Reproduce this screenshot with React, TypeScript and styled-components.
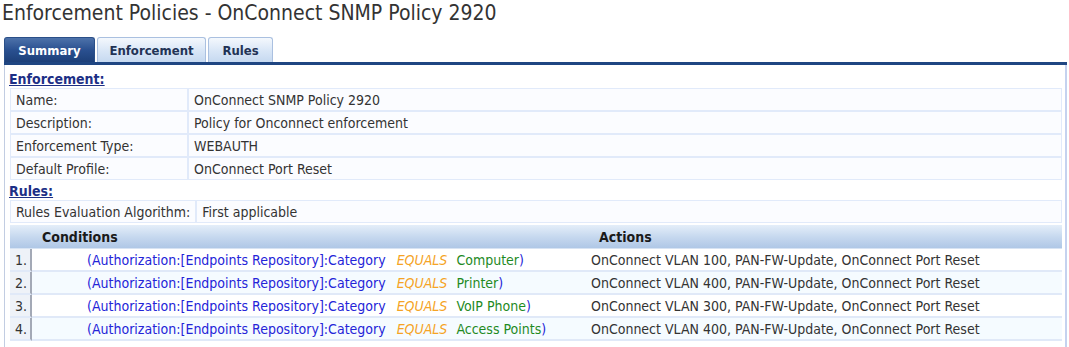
import React from "react";
import styled, { createGlobalStyle } from "styled-components";

const Global = createGlobalStyle`
  html, body { margin: 0; padding: 0; background: #fff; }
  body { font-family: "DejaVu Sans", Verdana, sans-serif; font-stretch: condensed; color: #333; }
`;

const Page = styled.div`
  padding: 0 2px 0 4px;
`;

const Title = styled.h1`
  margin: 0 0 0 -2px;
  height: 37px;
  font-weight: normal;
  font-size: 21px;
  line-height: 26px;
  color: #333;
`;

const TabBar = styled.div`
  display: flex;
  gap: 2px;
  align-items: flex-end;
  border-bottom: 3px solid #1f4682;
  height: 25px;
`;

const Tab = styled.div<{ $active?: boolean; $w: number }>`
  height: 25px;
  box-sizing: border-box;
  width: ${(p) => p.$w}px;
  display: flex;
  align-items: center;
  justify-content: center;
  font-weight: bold;
  font-size: 13px;
  padding-top: 1px;
  border-radius: 3px 3px 0 0;
  border: 1px solid ${(p) => (p.$active ? "#2a4f88" : "#aac0e0")};
  border-bottom: none;
  color: ${(p) => (p.$active ? "#fff" : "#223355")};
  background: ${(p) =>
    p.$active
      ? "linear-gradient(#4d72aa, #2a5090 50%, #1d4079)"
      : "linear-gradient(#f4f8fd, #dae7f7 50%, #c6d9f0)"};
`;

const Panel = styled.div`
  border-left: 1px solid #c2cde2;
  border-right: 2px solid #c5d2ef;
  padding: 5px 3px 8px 5px;
`;

const Heading = styled.div`
  font-weight: bold;
  font-size: 14px;
  color: #1c2f86;
  text-decoration: underline;
  line-height: 18px;
  margin-left: -1px;
`;

const KVTable = styled.table<{ $labelW: number; $mb?: number }>`
  width: 100%;
  border-collapse: separate;
  border-spacing: 0;
  font-size: 14px;
  margin-bottom: ${(p) => p.$mb ?? 0}px;
  td {
    border: 1px solid #e1eafa;
    background: #fbfcff;
    height: 21px;
    padding: 0 5px;
    color: #333;
    white-space: nowrap;
  }
  td:first-child { width: ${(p) => p.$labelW}px; }
`;

const RulesTable = styled.table`
  width: 100%;
  border-collapse: separate;
  border-spacing: 0;
  font-size: 14px;
  margin-top: 2px;
`;

const HeadCell = styled.th<{ $pl: number }>`
  text-align: left;
  height: 23px;
  padding: 0 0 0 ${(p) => p.$pl}px;
  font-size: 14px;
  color: #1a1a1a;
  background: linear-gradient(#e4eef9, #c7d9ef 50%, #afc7e6);
  border-bottom: 1px solid #d7e3f3;
`;

const Row = styled.tr<{ $alt?: boolean }>`
  td {
    height: 21px;
    border-bottom: 2px solid #e0e9f8;
    background: ${(p) => (p.$alt ? "#f5fbff" : "#fff")};
    white-space: nowrap;
  }
`;

const NumCell = styled.td`
  width: 15px;
  padding: 0 0 0 5px;
  text-align: left;
  && { background: #eef2f8; }
  border-right: 2px solid #a3a9b6;
  color: #333;
`;

const CondCell = styled.td`
  padding: 0 0 0 55px;
  width: 496px;
`;

const ActCell = styled.td`
  padding: 0 0 0 8px;
  color: #333;
`;

const Attr = styled.span`
  color: #2424d8;
`;
const Op = styled.span`
  color: #f5a325;
  font-style: italic;
  margin: 0 9px 0 11px;
`;
const Val = styled.span`
  color: #1f8a1f;
`;

const rules = [
  { v: "Computer", a: "OnConnect VLAN 100, PAN-FW-Update, OnConnect Port Reset" },
  { v: "Printer", a: "OnConnect VLAN 400, PAN-FW-Update, OnConnect Port Reset" },
  { v: "VoIP Phone", a: "OnConnect VLAN 300, PAN-FW-Update, OnConnect Port Reset" },
  { v: "Access Points", a: "OnConnect VLAN 400, PAN-FW-Update, OnConnect Port Reset" },
];

export default function App() {
  return (
    <Page>
      <Global />
      <Title>Enforcement Policies - OnConnect SNMP Policy 2920</Title>
      <TabBar>
        <Tab $active $w={91}>Summary</Tab>
        <Tab $w={109}>Enforcement</Tab>
        <Tab $w={65}>Rules</Tab>
      </TabBar>
      <Panel>
        <Heading>Enforcement:</Heading>
        <KVTable $labelW={166} $mb={2}>
          <tbody>
            <tr><td>Name:</td><td>OnConnect SNMP Policy 2920</td></tr>
            <tr><td>Description:</td><td>Policy for Onconnect enforcement</td></tr>
            <tr><td>Enforcement Type:</td><td>WEBAUTH</td></tr>
            <tr><td>Default Profile:</td><td>OnConnect Port Reset</td></tr>
          </tbody>
        </KVTable>
        <Heading>Rules:</Heading>
        <KVTable $labelW={173}>
          <tbody>
            <tr><td>Rules Evaluation Algorithm:</td><td>First applicable</td></tr>
          </tbody>
        </KVTable>
        <RulesTable>
          <thead>
            <tr>
              <HeadCell $pl={0} />
              <HeadCell $pl={10}>Conditions</HeadCell>
              <HeadCell $pl={16}>Actions</HeadCell>
            </tr>
          </thead>
          <tbody>
            {rules.map((r, i) => (
              <Row key={i} $alt={i % 2 === 1}>
                <NumCell>{i + 1}.</NumCell>
                <CondCell>
                  <Attr>(Authorization:[Endpoints Repository]:Category</Attr>
                  <Op>EQUALS</Op>
                  <Val>{r.v}</Val>
                  <Attr>)</Attr>
                </CondCell>
                <ActCell>{r.a}</ActCell>
              </Row>
            ))}
          </tbody>
        </RulesTable>
      </Panel>
    </Page>
  );
}
